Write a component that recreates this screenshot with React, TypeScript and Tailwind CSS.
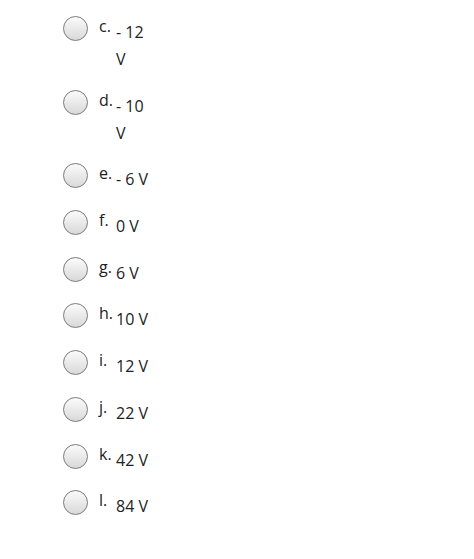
const options = [
  { key: 'c.', value: '- 12 V' },
  { key: 'd.', value: '- 10 V' },
  { key: 'e.', value: '- 6 V' },
  { key: 'f.', value: '0 V' },
  { key: 'g.', value: '6 V' },
  { key: 'h.', value: '10 V' },
  { key: 'i.', value: '12 V' },
  { key: 'j.', value: '22 V' },
  { key: 'k.', value: '42 V' },
  { key: 'l.', value: '84 V' },
];

export default function App() {
  return (
    <div className="w-[474px] h-[559px] bg-white pl-[63px] pt-4 font-['Open_Sans',sans-serif] text-[#222]">
      <div className="flex flex-col gap-[16.7px]">
        {options.map((opt) => (
          <label key={opt.key} className="flex items-start">
            <span className="w-[25px] h-[25px] shrink-0 rounded-full border-[1.5px] border-[#7b7b7b] bg-linear-to-b from-[#fbfbfb] to-[#d9d9d9]" />
            <span className="ml-[11px] w-[17px] shrink-0 text-[16px] leading-[20px]">{opt.key}</span>
            <span className="mt-[3px] w-[36px] text-[16px] leading-[27px]">{opt.value}</span>
          </label>
        ))}
      </div>
    </div>
  );
}
